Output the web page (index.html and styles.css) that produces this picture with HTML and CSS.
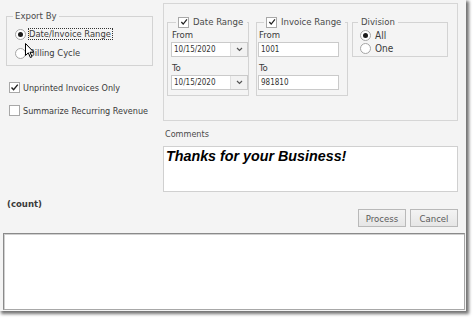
FILE: index.html
```html
<!DOCTYPE html>
<html>
<head>
<meta charset="utf-8">
<link rel="stylesheet" href="styles.css">
</head>
<body>
<div class="window">
  <div class="main">
    <div class="left">
      <fieldset class="group export">
        <legend>Export By</legend>
        <div class="radio-row">
          <span class="radio on"></span>
          <span class="rlabel focus">Date/Invoice Range</span>
        </div>
        <div class="radio-row">
          <span class="radio"></span>
          <span class="rlabel">Billing Cycle</span>
        </div>
        <svg class="cursor" width="10" height="16" viewBox="0 0 10 16"><path d="M0.5 0.5 L0.5 12.5 L3.3 9.8 L5.3 14.5 L7 13.8 L5 9.2 L8.8 9.2 Z" fill="#fff" stroke="#000" stroke-width="1" stroke-linejoin="round"/></svg>
      </fieldset>
      <div class="check-row first">
        <span class="check on"><svg width="9" height="9" viewBox="0 0 9 9"><path d="M1.5 4.5 L3.6 6.8 L7.8 1.6" fill="none" stroke="#222" stroke-width="1.4"/></svg></span>
        <span>Unprinted Invoices Only</span>
      </div>
      <div class="check-row">
        <span class="check"></span>
        <span>Summarize Recurring Revenue</span>
      </div>
    </div>
    <div class="right">
      <div class="panel">
        <fieldset class="group date">
          <legend><span class="check on small"><svg width="8" height="8" viewBox="0 0 9 9"><path d="M1.5 4.5 L3.6 6.8 L7.8 1.6" fill="none" stroke="#222" stroke-width="1.4"/></svg></span>Date Range</legend>
          <div class="flabel">From</div>
          <div class="input combo"><span class="val">10/15/2020</span><span class="drop"><svg width="7" height="5" viewBox="0 0 7 5"><path d="M1 1 L3.5 3.5 L6 1" fill="none" stroke="#555" stroke-width="1.2"/></svg></span></div>
          <div class="flabel to">To</div>
          <div class="input combo"><span class="val">10/15/2020</span><span class="drop"><svg width="7" height="5" viewBox="0 0 7 5"><path d="M1 1 L3.5 3.5 L6 1" fill="none" stroke="#555" stroke-width="1.2"/></svg></span></div>
        </fieldset>
        <fieldset class="group invoice">
          <legend><span class="check on small"><svg width="8" height="8" viewBox="0 0 9 9"><path d="M1.5 4.5 L3.6 6.8 L7.8 1.6" fill="none" stroke="#222" stroke-width="1.4"/></svg></span>Invoice Range</legend>
          <div class="flabel">From</div>
          <div class="input"><span class="val">1001</span></div>
          <div class="flabel to">To</div>
          <div class="input"><span class="val">981810</span></div>
        </fieldset>
        <fieldset class="group division">
          <legend>Division</legend>
          <div class="radio-row small">
            <span class="radio on"></span>
            <span class="dlabel">All</span>
          </div>
          <div class="radio-row small">
            <span class="radio"></span>
            <span class="dlabel">One</span>
          </div>
        </fieldset>
      </div>
      <div class="comments-label">Comments</div>
      <div class="comments-box">Thanks for your Business!</div>
    </div>
  </div>
  <div class="actions">
    <div class="count">(count)</div>
    <div class="buttons">
      <button class="btn">Process</button>
      <button class="btn">Cancel</button>
    </div>
  </div>
  <div class="result-box"></div>
</div>
</body>
</html>
```
FILE: styles.css
```css
html, body {
  margin: 0;
  padding: 0;
  background: #ffffff;
}
body {
  width: 474px;
  height: 319px;
  overflow: hidden;
}
.window {
  width: 466px;
  height: 311px;
  background: #f4f4f4;
  box-shadow: 2px 2px 3px 1px rgba(0,0,0,0.55);
  font-family: "DejaVu Sans Condensed", "DejaVu Sans", sans-serif;
  font-stretch: condensed;
  font-size: 9px;
  color: #3a3a3a;
  display: flex;
  flex-direction: column;
}
.main {
  display: flex;
  height: 192px;
}
.left {
  width: 157px;
  flex-shrink: 0;
  padding: 10px 0 0 6px;
}
.right {
  width: 295px;
  display: flex;
  flex-direction: column;
  padding-top: 3px;
}
.group {
  margin: 0;
  border: 1px solid #d3d3d3;
  box-sizing: border-box;
  min-width: 0;
}
.group legend {
  line-height: 12px;
  padding: 0 2px;
  color: #4a4a4a;
  font-size: 9.5px;
  display: flex;
  align-items: center;
}
.export {
  position: relative;
  width: 147px;
  height: 56px;
  padding: 5px 0 0 8px;
}
.export legend {
  margin-left: -2px;
}
.radio-row {
  display: flex;
  align-items: center;
  height: 14px;
}
.radio-row + .radio-row {
  margin-top: 5px;
}
.radio {
  width: 9px;
  height: 9px;
  border: 1px solid #a5a5a5;
  border-radius: 50%;
  background: #fff;
  display: flex;
  align-items: center;
  justify-content: center;
  flex-shrink: 0;
}
.radio.on::after {
  content: "";
  width: 5px;
  height: 5px;
  border-radius: 50%;
  background: #1a1a1a;
}
.rlabel {
  margin-left: 2px;
  padding: 0 1px 0 0;
  border: 1px dotted transparent;
  line-height: 10px;
  font-size: 9.3px;
}
.rlabel.focus {
  border-color: #333;
}
.cursor {
  position: absolute;
  left: 18px;
  top: 21px;
}
.check-row {
  display: flex;
  align-items: center;
  height: 13px;
  margin-top: 10px;
}
.check-row.first {
  margin-top: 15px;
}
.check {
  width: 9px;
  height: 9px;
  border: 1px solid #a8a8a8;
  background: #fff;
  margin: 0 3px 0 3px;
  display: flex;
  align-items: center;
  justify-content: center;
  flex-shrink: 0;
}
.check.small {
  margin: 0 4px 0 0;
}
.panel {
  height: 118px;
  box-sizing: border-box;
  border: 1px solid #d6d6d6;
  display: flex;
  align-items: flex-start;
  padding: 12px 0 0 3px;
}
.date {
  width: 82px;
  height: 80px;
  padding: 1px 0 0 3px;
}
.date legend {
  margin-left: 5px;
  padding-right: 4px;
}
.invoice {
  width: 92px;
  height: 80px;
  margin-left: 7px;
  padding: 1px 0 0 1px;
}
.invoice legend {
  margin-left: 6px;
  padding-right: 4px;
}
.division {
  width: 96px;
  height: 41px;
  margin-left: 4px;
  padding: 1px 0 0 7px;
}
.division legend {
  margin-left: -2px;
  padding: 0 3px;
}
.radio-row.small {
  height: 13px;
}
.radio-row.small + .radio-row.small {
  margin-top: 0;
}
.dlabel {
  margin-left: 4px;
  font-size: 10px;
}
.flabel {
  line-height: 12px;
  padding-left: 1px;
  font-size: 9.5px;
}
.flabel.to {
  margin-top: 5px;
}
.input {
  margin-top: 1px;
  height: 15px;
  box-sizing: border-box;
  border: 1px solid #cacaca;
  background: #fff;
  display: flex;
  align-items: center;
  width: 81px;
  font-size: 8px;
  color: #333;
}
.input.combo {
  width: 77px;
}
.val {
  flex: 1;
  padding-left: 2px;
  line-height: 13px;
}
.drop {
  width: 16px;
  height: 13px;
  border-left: 1px solid #e0e0e0;
  background: #f2f2f2;
  display: flex;
  align-items: center;
  justify-content: center;
}
.comments-label {
  margin: 7px 0 0 2px;
  line-height: 12px;
  color: #4a4a4a;
}
.comments-box {
  margin-top: 6px;
  height: 46px;
  box-sizing: border-box;
  border: 1px solid #d0d0d0;
  background: #fff;
  padding: 1px 0 0 2px;
  font-family: "Liberation Sans", Arial, sans-serif;
  font-stretch: normal;
  font-weight: bold;
  font-style: italic;
  font-size: 14.3px;
  line-height: 16px;
  color: #000;
}
.actions {
  display: flex;
  align-items: flex-start;
  justify-content: space-between;
  height: 35px;
}
.count {
  margin: 6px 0 0 7px;
  line-height: 12px;
  font-weight: bold;
  font-size: 9.5px;
  color: #3a3a3a;
}
.buttons {
  display: flex;
  gap: 4px;
  margin: 17px 8px 0 0;
}
.btn {
  width: 48px;
  height: 18px;
  padding: 0;
  border: 1px solid #b9b9b9;
  background: linear-gradient(#f3f3f3, #e6e6e6);
  font-family: "DejaVu Sans Condensed", "DejaVu Sans", sans-serif;
  font-stretch: condensed;
  font-size: 9.5px;
  color: #5a5a5a;
}
.result-box {
  margin: 6px 0 0 3px;
  width: 462px;
  height: 77px;
  box-sizing: border-box;
  border: 1px solid #8a8a8a;
  border-right-color: #a8a8a8;
  border-bottom-color: #a8a8a8;
  box-shadow: inset 1px 1px 0 #d0d0d0;
  background: #fff;
}
```
